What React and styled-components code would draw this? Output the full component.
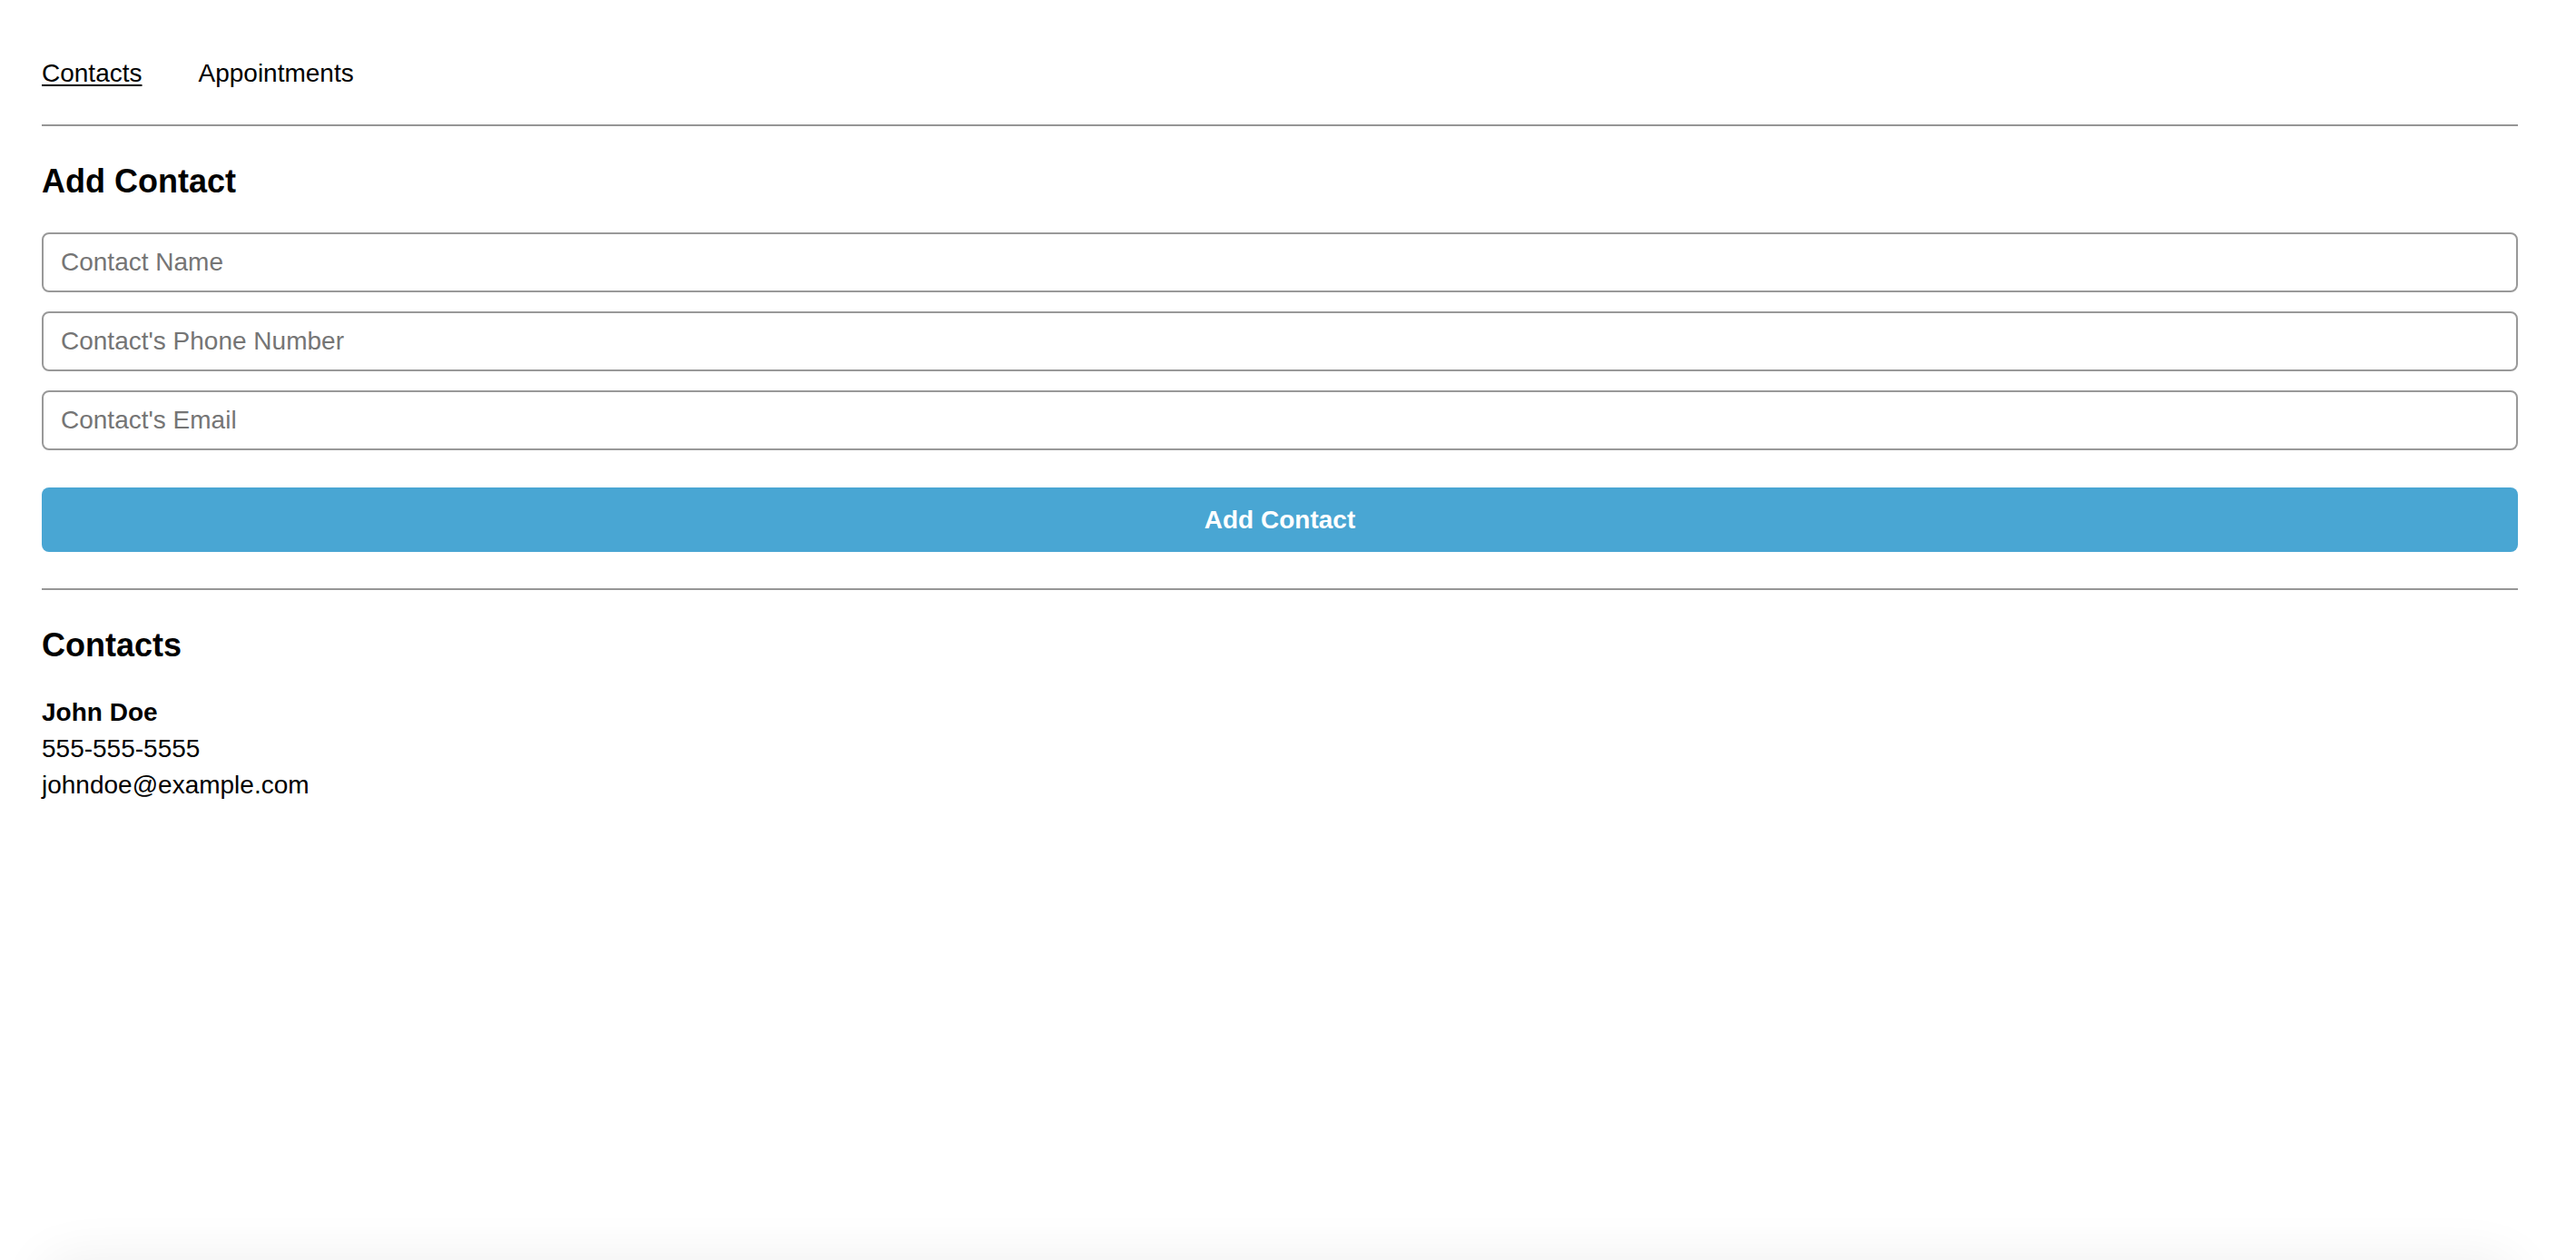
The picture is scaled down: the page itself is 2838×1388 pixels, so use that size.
import React, { useState } from "react";
import styled, { createGlobalStyle } from "styled-components";

const Global = createGlobalStyle`
  html, body {
    margin: 0;
    background: #fff;
  }
  body {
    font-family: "Liberation Sans", Arial, Helvetica, sans-serif;
    font-size: 28px;
    line-height: 40px;
    color: #000;
  }
`;

const Page = styled.div`
  padding: 61px 64px 0 46px;
`;

const Nav = styled.nav`
  display: flex;
  gap: 62px;
`;

const NavLink = styled.a`
  color: #000;
  text-decoration: ${(p) => (p.$active ? "underline" : "none")};
  text-underline-offset: 3px;
  text-decoration-thickness: 2px;
  cursor: pointer;
`;

const Rule = styled.div`
  height: 2px;
  background: #969696;
  margin-top: ${(p) => p.$top}px;
`;

const Title = styled.h2`
  font-size: 36px;
  font-weight: bold;
  line-height: normal;
  margin: 40px 0 0;
`;

const Form = styled.form`
  display: flex;
  flex-direction: column;
  margin-top: 35px;
`;

const Fields = styled.div`
  display: flex;
  flex-direction: column;
  gap: 21px;
`;

const Input = styled.input`
  box-sizing: border-box;
  height: 66px;
  border: 2px solid #999;
  border-radius: 8px;
  padding: 0 19px;
  font-family: inherit;
  font-size: 28px;
  color: #000;
  outline: none;
  &::placeholder {
    color: #757575;
  }
`;

const Button = styled.button`
  margin-top: 41px;
  height: 71px;
  border: none;
  border-radius: 8px;
  background: #49a6d3;
  color: #fff;
  font-family: inherit;
  font-size: 28px;
  font-weight: bold;
  cursor: pointer;
`;

const List = styled.div`
  display: flex;
  flex-direction: column;
  gap: 26px;
  margin-top: 33px;
`;

const Tile = styled.div`
  display: flex;
  flex-direction: column;
`;

const Name = styled.span`
  font-weight: bold;
`;

// faint shadow of a box sitting just under the bottom of the window
const BottomShade = styled.div`
  position: fixed;
  left: 46px;
  right: 64px;
  top: 100vh;
  height: 60px;
  border-radius: 30px;
  box-shadow: 0 0 60px rgba(0, 0, 0, 0.07);
`;

const App = () => {
  const [contacts, setContacts] = useState([
    { name: "John Doe", phone: "555-555-5555", email: "johndoe@example.com" },
  ]);
  const [name, setName] = useState("");
  const [phone, setPhone] = useState("");
  const [email, setEmail] = useState("");

  const onSubmit = (e) => {
    e.preventDefault();
    if (!name) return;
    setContacts([...contacts, { name, phone, email }]);
    setName("");
    setPhone("");
    setEmail("");
  };

  return (
    <>
      <Global />
      <Page>
        <Nav>
          <NavLink $active>Contacts</NavLink>
          <NavLink>Appointments</NavLink>
        </Nav>
        <Rule $top={36} />
        <Title>Add Contact</Title>
        <Form onSubmit={onSubmit}>
          <Fields>
            <Input
              placeholder="Contact Name"
              value={name}
              onChange={(e) => setName(e.target.value)}
            />
            <Input
              placeholder="Contact's Phone Number"
              value={phone}
              onChange={(e) => setPhone(e.target.value)}
            />
            <Input
              placeholder="Contact's Email"
              value={email}
              onChange={(e) => setEmail(e.target.value)}
            />
          </Fields>
          <Button type="submit">Add Contact</Button>
        </Form>
        <Rule $top={40} />
        <Title>Contacts</Title>
        <List>
          {contacts.map((c) => (
            <Tile key={c.name + c.email}>
              <Name>{c.name}</Name>
              <span>{c.phone}</span>
              <span>{c.email}</span>
            </Tile>
          ))}
        </List>
      </Page>
      <BottomShade />
    </>
  );
};

export default App;
